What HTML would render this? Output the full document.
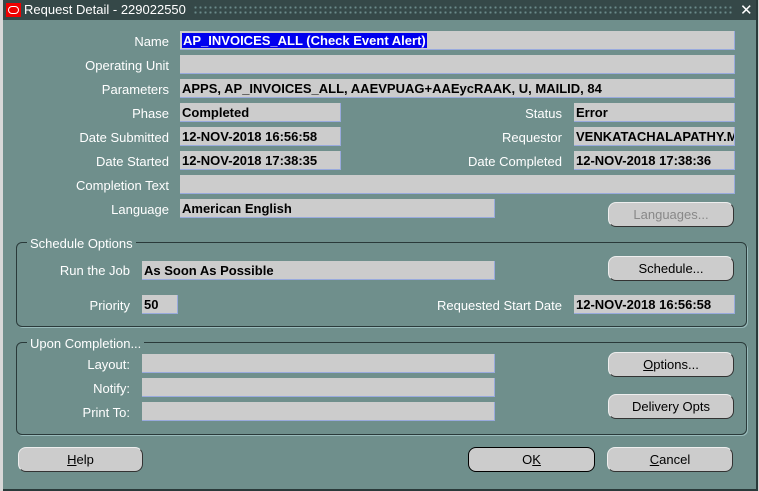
<!DOCTYPE html><html><head><style>
body{margin:0;width:759px;height:491px;overflow:hidden;background:#d8d8d8;font-family:"Liberation Sans",Arial,sans-serif;font-size:13px}
#w{position:absolute;left:3px;top:0;width:753px;height:489px;background:#6f8f8c;border-right:2px solid #2a3a3a;border-bottom:2px solid #2a3a3a}
#t{position:absolute;left:0;top:0;width:753px;height:20px;background:#354848;color:#fff;font-size:13px}
#t .dots{position:absolute;left:190px;top:5px;width:540px;height:10px;background-image:radial-gradient(#6a8a8a 1px,transparent 1.2px);background-size:5px 5px}
.l{position:absolute;color:#fff;text-align:right;white-space:nowrap;line-height:19px}
.f{position:absolute;background:#cccccc;height:19px;line-height:19px;font-weight:bold;color:#000;padding-left:2px;box-sizing:border-box;border-bottom:1px solid #9ad;border-right:1px solid #9ad;white-space:nowrap;overflow:hidden}
.b{position:absolute;background:#cccccc;border-radius:8px;height:25px;line-height:24px;text-align:center;color:#000;box-sizing:border-box;border:1px solid #eee;border-right-color:#333;border-bottom-color:#333}
.g{position:absolute;border:1px solid #2a3a3a;border-radius:6px;box-shadow:1px 1px 0 #9bb}
.gt{position:absolute;color:#fff;background:#6f8f8c;padding:0 3px;line-height:15px}
</style></head><body>
<div id="w">
<div id="t"><span style="position:absolute;left:3px;top:3px;width:15px;height:14px;background:#e00"><span style="position:absolute;left:2px;top:3px;width:9px;height:6px;border:1.5px solid #fff;border-radius:4px"></span></span><span style="position:absolute;left:21px;top:2px">Request Detail - 229022550</span><div class="dots"></div><span style="position:absolute;left:737px;top:1px;font-size:15px">✕</span></div>

<div class="l" style="left:0;width:166px;top:32px">Name</div><div class="f" style="left:177px;top:31px;width:555px"><span style="background:#0000ee;color:#fff;padding:0 1px">AP_INVOICES_ALL (Check Event Alert)</span></div>
<div class="l" style="left:0;width:166px;top:56px">Operating Unit</div><div class="f" style="left:177px;top:55px;width:555px"></div>
<div class="l" style="left:0;width:166px;top:80px">Parameters</div><div class="f" style="left:177px;top:79px;width:555px">APPS, AP_INVOICES_ALL, AAEVPUAG+AAEycRAAK, U, MAILID, 84</div>
<div class="l" style="left:0;width:166px;top:104px">Phase</div><div class="f" style="left:177px;top:103px;width:161px">Completed</div>
<div class="l" style="left:400px;width:159px;top:104px">Status</div><div class="f" style="left:571px;top:103px;width:161px">Error</div>
<div class="l" style="left:0;width:166px;top:128px">Date Submitted</div><div class="f" style="left:177px;top:127px;width:161px">12-NOV-2018 16:56:58</div>
<div class="l" style="left:400px;width:159px;top:128px">Requestor</div><div class="f" style="left:571px;top:127px;width:161px">VENKATACHALAPATHY.M</div>
<div class="l" style="left:0;width:166px;top:152px">Date Started</div><div class="f" style="left:177px;top:151px;width:161px">12-NOV-2018 17:38:35</div>
<div class="l" style="left:400px;width:159px;top:152px">Date Completed</div><div class="f" style="left:571px;top:151px;width:161px">12-NOV-2018 17:38:36</div>
<div class="l" style="left:0;width:166px;top:176px">Completion Text</div><div class="f" style="left:177px;top:175px;width:555px"></div>
<div class="l" style="left:0;width:166px;top:200px">Language</div><div class="f" style="left:177px;top:199px;width:315px">American English</div>
<div class="b" style="left:605px;top:202px;width:126px;color:#888">Languages...</div>

<div class="g" style="left:13px;top:242px;width:729px;height:83px"></div><div class="gt" style="left:24px;top:236px">Schedule Options</div>
<div class="l" style="left:0;width:127px;top:261px">Run the Job</div><div class="f" style="left:139px;top:261px;width:353px">As Soon As Possible</div>
<div class="b" style="left:605px;top:256px;width:126px">Schedule...</div>
<div class="l" style="left:0;width:127px;top:296px">Priority</div><div class="f" style="left:139px;top:295px;width:36px">50</div>
<div class="l" style="left:400px;width:159px;top:296px">Requested Start Date</div><div class="f" style="left:571px;top:295px;width:161px">12-NOV-2018 16:56:58</div>

<div class="g" style="left:13px;top:342px;width:729px;height:91px"></div><div class="gt" style="left:24px;top:336px">Upon Completion...</div>
<div class="l" style="left:0;width:127px;top:355px">Layout:</div><div class="f" style="left:139px;top:354px;width:353px"></div>
<div class="l" style="left:0;width:127px;top:379px">Notify:</div><div class="f" style="left:139px;top:378px;width:353px"></div>
<div class="l" style="left:0;width:127px;top:403px">Print To:</div><div class="f" style="left:139px;top:402px;width:353px"></div>
<div class="b" style="left:605px;top:352px;width:126px"><u>O</u>ptions...</div>
<div class="b" style="left:605px;top:394px;width:126px">Delivery Opts</div>

<div class="b" style="left:15px;top:447px;width:125px"><u>H</u>elp</div>
<div class="b" style="left:465px;top:447px;width:127px;border:1px solid #000">O<u>K</u></div>
<div class="b" style="left:604px;top:447px;width:126px"><u>C</u>ancel</div>
</div></body></html>
